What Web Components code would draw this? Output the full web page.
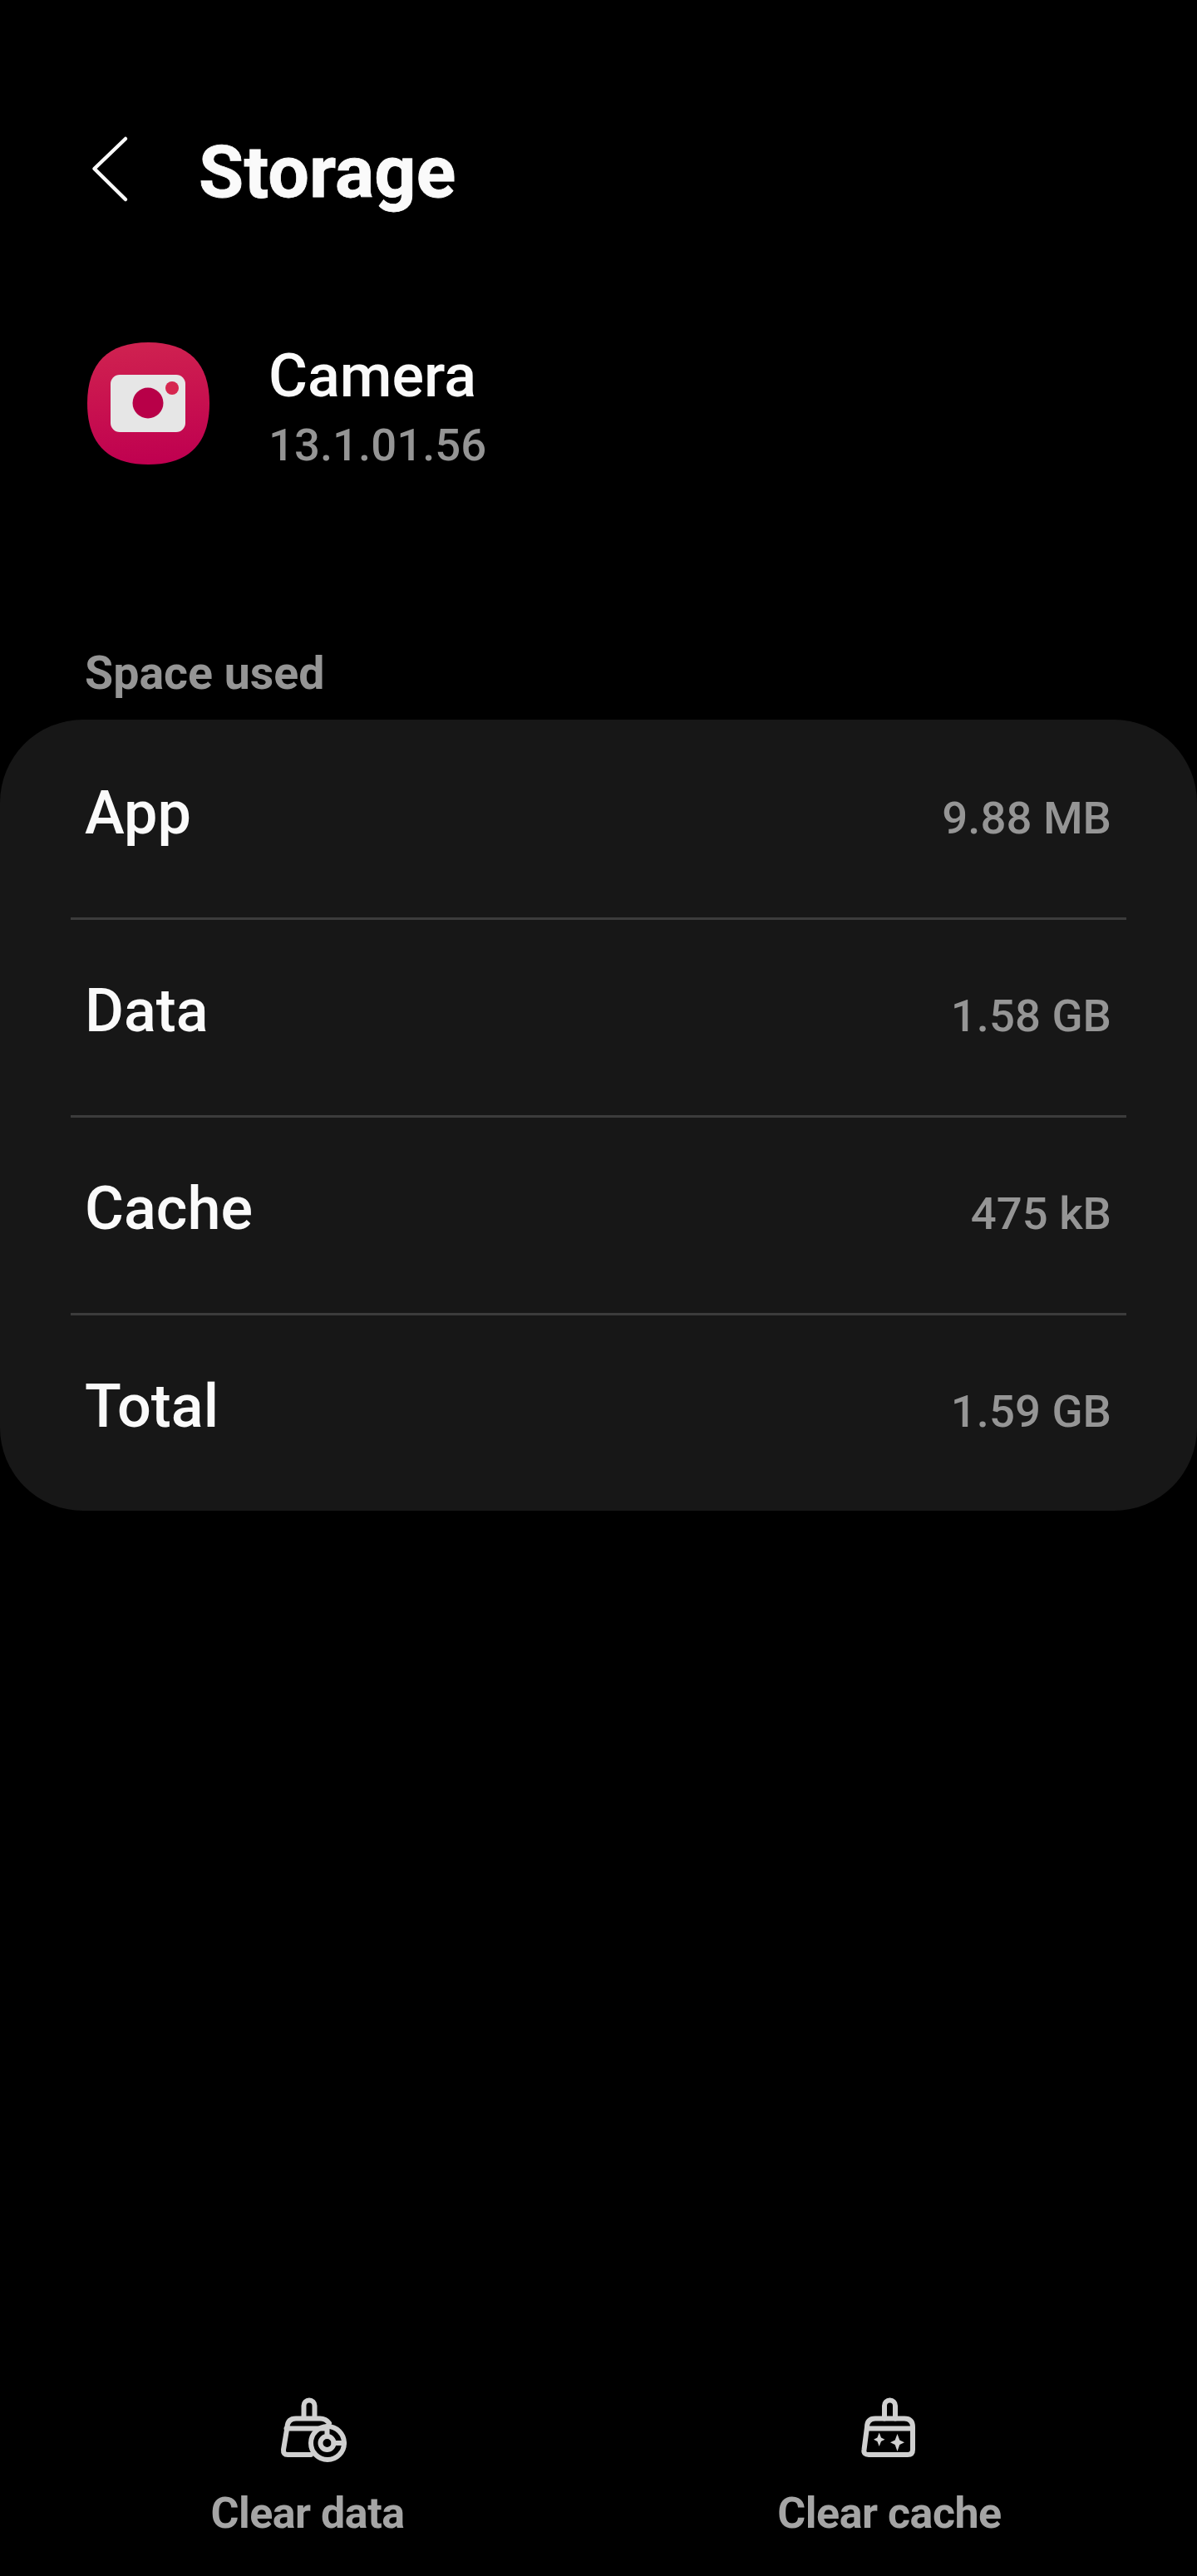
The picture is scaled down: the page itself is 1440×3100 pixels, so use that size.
<!DOCTYPE html>
<html>
<head>
<meta charset="utf-8">
<title>Storage</title>
<style>
  html, body { margin: 0; background: #000; }
  body { font-family: Roboto, "Liberation Sans", sans-serif; color: #fafafa; }
  storage-page { height: 3100px; }
</style>
</head>
<body>
<storage-page>
  <page-header>Storage</page-header>
  <app-info name="Camera" version="13.1.01.56"></app-info>
  <section-label>Space used</section-label>
  <storage-card>
    <storage-row label="App" value="9.88 MB"></storage-row>
    <storage-row label="Data" value="1.58 GB"></storage-row>
    <storage-row label="Cache" value="475 kB"></storage-row>
    <storage-row label="Total" value="1.59 GB" last></storage-row>
  </storage-card>
  <action-bar slot="bottom">
    <action-button label="Clear data">
      <svg viewBox="-10 0 100 90" width="100" height="90" fill="none" stroke="#d0d0d0" stroke-width="6" stroke-linecap="round" stroke-linejoin="round">
        <path d="M35.500 30V15a6.500 6.500 0 0 1 13 0V30"/>
        <path d="M66 36Q62 30.500 55 30.500H26Q16 30.500 15.500 41L11 68Q10.500 74 16 74H44"/>
        <path d="M14.500 42.500H62"/>
        <circle cx="64" cy="60" r="20"/>
        <circle cx="63.500" cy="60" r="8"/>
        <path d="M63.500 40V52M71.500 60H84"/>
      </svg>
    </action-button>
    <action-button label="Clear cache">
      <svg viewBox="0 0 100 90" width="100" height="90" fill="none" stroke="#d0d0d0" stroke-width="6" stroke-linecap="round" stroke-linejoin="round">
        <path d="M44 30.500V15a6.500 6.500 0 0 1 13 0V30.500"/>
        <path d="M33 30.500H68Q78 30.500 78 41V68Q78 74 72 74H25Q18.500 74 19.500 68L23 41Q23 30.500 33 30.500Z"/>
        <path d="M23 42.500H78"/>
        <path fill="#d0d0d0" stroke="none" d="M37.700 47.500L40 53.500 44.500 55.700 40 58 37.700 64 35.400 58 31 55.700 35.400 53.500Z"/>
        <path fill="#d0d0d0" stroke="none" d="M59.500 49L62.300 56.500 68 59.300 62.300 62 59.500 70 56.700 62 51 59.300 56.700 56.500Z"/>
      </svg>
    </action-button>
  </action-bar>
</storage-page>

<script>
class StoragePage extends HTMLElement {
  connectedCallback() {
    this.attachShadow({mode: 'open'});
    this.shadowRoot.innerHTML = `
      <style>
        :host { display: flex; flex-direction: column; box-sizing: border-box; }
        .bottom { margin-top: auto; }
      </style>
      <slot></slot>
      <div class="bottom"><slot name="bottom"></slot></div>
    `;
  }
}
customElements.define('storage-page', StoragePage);

class PageHeader extends HTMLElement {
  connectedCallback() {
    this.attachShadow({mode: 'open'});
    this.shadowRoot.innerHTML = `
      <style>
        :host { display: flex; align-items: center; height: 104px; padding: 155px 0 2px 110px; }
        svg { display: block; width: 129px; height: 104px; flex: none; }
        h1 { margin: 0; font-size: 88px; line-height: 104px; font-weight: 700; letter-spacing: 0.2px; -webkit-text-stroke: 0.8px #fafafa; }
      </style>
      <svg viewBox="0 0 129 104" fill="none" stroke="#fafafa" stroke-width="4.500" stroke-linecap="round" stroke-linejoin="round">
        <path d="M41 12L3.500 48 41 85"/>
      </svg>
      <h1><slot></slot></h1>
    `;
  }
}
customElements.define('page-header', PageHeader);

class AppInfo extends HTMLElement {
  connectedCallback() {
    this.attachShadow({mode: 'open'});
    this.shadowRoot.innerHTML = `
      <style>
        :host { display: flex; align-items: flex-start; gap: 71px; padding: 151px 0 0 105px; }
        svg { display: block; width: 147px; height: 147px; flex: none; }
        .text { margin-top: 1px; }
        .name { font-size: 72px; line-height: 80px; font-weight: 500; }
        .version { font-size: 54.500px; line-height: 64px; font-weight: 500; color: #959595; margin-top: 10px; }
      </style>
      <svg viewBox="0 0 147 147">
        <defs>
          <linearGradient id="g" x1="0.400" y1="0" x2="0.500" y2="1">
            <stop offset="0" stop-color="#cf2250"/>
            <stop offset="0.500" stop-color="#c8114f"/>
            <stop offset="1" stop-color="#bf0050"/>
          </linearGradient>
        </defs>
        <path fill="url(#g)" d="M73.500 0C122 0 147 25 147 73.500S122 147 73.500 147 0 122 0 73.500 25 0 73.500 0Z"/>
        <rect x="28" y="39" width="90" height="69" rx="11" fill="#e6e6e6"/>
        <circle cx="73" cy="73" r="18.500" fill="#b80048"/>
        <circle cx="102" cy="55" r="8" fill="#d6264f"/>
      </svg>
      <div class="text">
        <div class="name">${this.getAttribute('name')}</div>
        <div class="version">${this.getAttribute('version')}</div>
      </div>
    `;
  }
}
customElements.define('app-info', AppInfo);

class SectionLabel extends HTMLElement {
  connectedCallback() {
    this.attachShadow({mode: 'open'});
    this.shadowRoot.innerHTML = `
      <style>
        :host { display: block; padding: 212px 0 0 102px; margin-bottom: 23px; font-size: 55.500px; line-height: 64px; font-weight: 700; color: #959595; }
      </style>
      <slot></slot>
    `;
  }
}
customElements.define('section-label', SectionLabel);

class StorageCard extends HTMLElement {
  connectedCallback() {
    this.attachShadow({mode: 'open'});
    this.shadowRoot.innerHTML = `
      <style>
        :host { display: block; background: #171717; border-radius: 100px; padding-top: 3px; }
      </style>
      <slot></slot>
    `;
  }
}
customElements.define('storage-card', StorageCard);

class StorageRow extends HTMLElement {
  connectedCallback() {
    this.attachShadow({mode: 'open'});
    const last = this.hasAttribute('last');
    this.shadowRoot.innerHTML = `
      <style>
        :host { display: block; }
        .row { display: flex; justify-content: space-between; align-items: baseline; box-sizing: border-box; height: 235px; padding: 70px 103px 0 102px; }
        .label { font-size: 72px; line-height: 80px; font-weight: 500; color: #fafafa; }
        .value { font-size: 54.500px; line-height: 64px; font-weight: 500; color: #959595; }
        .line { height: 3px; margin: 0 85px; background: #3c3c3c; }
      </style>
      <div class="row">
        <span class="label">${this.getAttribute('label')}</span>
        <span class="value">${this.getAttribute('value')}</span>
      </div>
      ${last ? '' : '<div class="line"></div>'}
    `;
  }
}
customElements.define('storage-row', StorageRow);

class ActionBar extends HTMLElement {
  connectedCallback() {
    this.attachShadow({mode: 'open'});
    this.shadowRoot.innerHTML = `
      <style>
        :host { display: grid; grid-template-columns: 1fr 1fr; padding: 0 20px 45px; }
      </style>
      <slot></slot>
    `;
  }
}
customElements.define('action-bar', ActionBar);

class ActionButton extends HTMLElement {
  connectedCallback() {
    this.attachShadow({mode: 'open'});
    this.shadowRoot.innerHTML = `
      <style>
        :host { display: flex; flex-direction: column; align-items: center; }
        .icon { height: 90px; margin-bottom: 25px; line-height: 0; }
        .label { font-size: 52px; line-height: 60px; font-weight: 700; color: #a5a5a5; letter-spacing: -0.5px; }
      </style>
      <div class="icon"><slot></slot></div>
      <div class="label">${this.getAttribute('label')}</div>
    `;
  }
}
customElements.define('action-button', ActionButton);
</script>
</body>
</html>
